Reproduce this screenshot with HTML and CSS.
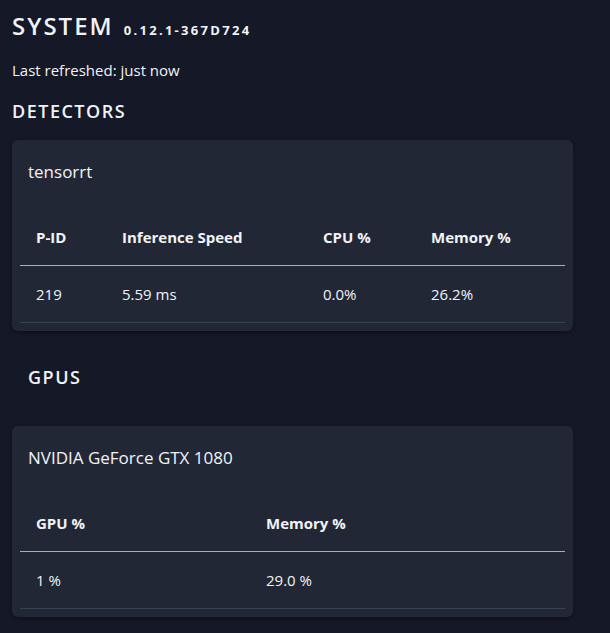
FILE: index.html
```html
<!DOCTYPE html>
<html>
<head>
<meta charset="utf-8">
<link rel="stylesheet" href="styles.css">
</head>
<body>
<main class="page">
  <header class="title-row">
    <h1 class="title">System</h1>
    <span class="version">0.12.1-367D724</span>
  </header>
  <p class="refreshed">Last refreshed: just now</p>
  <h2 class="section">Detectors</h2>
  <section class="card">
    <div class="card-title">tensorrt</div>
    <table class="stats">
      <colgroup>
        <col class="c-pid"><col class="c-speed"><col class="c-cpu"><col>
      </colgroup>
      <thead>
        <tr><th>P-ID</th><th>Inference Speed</th><th>CPU %</th><th>Memory %</th></tr>
      </thead>
      <tbody>
        <tr><td>219</td><td>5.59 ms</td><td>0.0%</td><td>26.2%</td></tr>
      </tbody>
    </table>
  </section>
  <h2 class="section section-gpus">GPUs</h2>
  <section class="card">
    <div class="card-title">NVIDIA GeForce GTX 1080</div>
    <table class="stats">
      <colgroup>
        <col class="c-gpu"><col>
      </colgroup>
      <thead>
        <tr><th>GPU %</th><th>Memory %</th></tr>
      </thead>
      <tbody>
        <tr><td>1 %</td><td>29.0 %</td></tr>
      </tbody>
    </table>
  </section>
</main>
</body>
</html>
```
FILE: styles.css
```css
html, body {
  margin: 0;
  padding: 0;
  background: #151826;
}
body {
  font-family: "Open Sans", "Noto Sans", sans-serif;
  color: #f1f3f7;
}
.page {
  width: 561px;
  padding: 9px 12px 16px 12px;
}
.title-row {
  display: flex;
  align-items: baseline;
  gap: 10px;
}
.title {
  margin: 0;
  font-size: 24px;
  line-height: 34px;
  font-weight: 600;
  letter-spacing: 2px;
  text-transform: uppercase;
}
.version {
  font-size: 13px;
  font-weight: 700;
  letter-spacing: 2.3px;
}
.refreshed {
  margin: 17px 0 0 0;
  font-size: 15px;
  line-height: 20px;
}
.section {
  margin: 19px 0 0 0;
  font-size: 18px;
  line-height: 24px;
  font-weight: 600;
  letter-spacing: 1.5px;
  text-transform: uppercase;
}
.section-gpus {
  padding: 34px 16px 37px 16px;
  margin: 0;
}
.card {
  margin-top: 17px;
  background: #222736;
  border-radius: 6px;
  padding: 8px;
  box-shadow: 0 2px 4px rgba(0, 0, 0, 0.35);
}
.section-gpus + .card {
  margin-top: 0;
}
.card-title {
  padding: 12px 8px 25px 8px;
  font-size: 17px;
  line-height: 24px;
}
.stats {
  width: 100%;
  border-collapse: collapse;
  table-layout: fixed;
  font-size: 15px;
}
.stats th, .stats td {
  text-align: left;
  padding: 16px;
  line-height: 24px;
}
.stats th {
  font-weight: 700;
  border-bottom: 1px solid #a9adb8;
}
.stats td {
  border-bottom: 1px solid #3b4050;
}
.c-pid { width: 86px; }
.c-speed { width: 201px; }
.c-cpu { width: 108px; }
.c-gpu { width: 230px; }
```
